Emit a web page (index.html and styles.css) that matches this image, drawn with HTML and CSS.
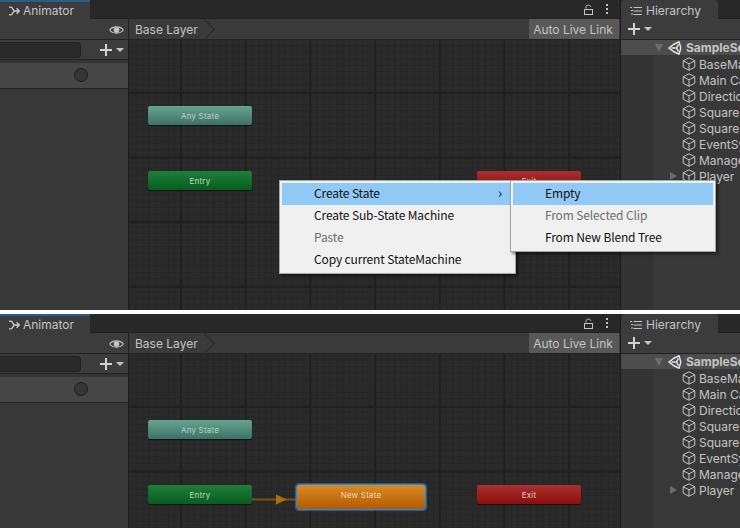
FILE: index.html
```html
<!DOCTYPE html>
<html lang="en">
<head>
<meta charset="utf-8">
<title>Animator</title>
<link rel="stylesheet" href="styles.css">
</head>
<body>
<svg class="defs" width="0" height="0" aria-hidden="true">
  <symbol id="cube" viewBox="0 0 14 14"><path d="M7 .8 12.8 3.800V10.200L7 13.200 1.200 10.200V3.800ZM1.200 3.800 7 6.800 12.800 3.800M7 6.800V13.200" fill="none" stroke="#c4c4c4" stroke-width="1"/></symbol>
  <symbol id="unity" viewBox="0 0 14 14"><path d="M1 7 6 3.200 11 .8 12.600 6 12.600 8 11 13.200 6 10.800ZM3.400 7H8.600L10.400 3.400M8.600 7 10.400 10.600" fill="none" stroke="#e2e2e2" stroke-width="1.500"/></symbol>
  <symbol id="anim" viewBox="0 0 12 10"><path d="M0 .8 3 1 5.500 5 3 9 0 9.200M5.500 5H11M8.300 2 11.300 5 8.300 8" fill="none" stroke="#cfcfcf" stroke-width="1.400"/></symbol>
  <symbol id="eye" viewBox="0 0 16 10"><path d="M.8 5C4 .6 12 .6 15.200 5 12 9.400 4 9.400 .8 5Z" fill="none" stroke="#c4c4c4" stroke-width="1.200"/><circle cx="8" cy="5" r="3" fill="#c4c4c4"/></symbol>
  <symbol id="lock" viewBox="0 0 9 11"><path d="M2 4.500V2.800C2 .6 6.600 .6 6.800 2.800" fill="none" stroke="#c4c4c4"/><rect x=".5" y="5.500" width="8" height="5" fill="none" stroke="#c4c4c4"/></symbol>
  <symbol id="list" viewBox="0 0 12 10"><path d="M3.500 1.500H12M3.500 5H12M3.500 8.500H12" stroke="#c4c4c4" fill="none"/><path d="M0 1.500H2M1 4.500H3M1 8H3" stroke="#c4c4c4" fill="none"/></symbol>
</svg>

<section class="shot shot-top">
  <div class="animator">
    <div class="tabbar">
      <div class="tab tab-anim"><svg class="tab-icon"><use href="#anim"/></svg><span>Animator</span></div>
      <div class="tab-tools">
        <svg class="lock"><use href="#lock"/></svg>
        <span class="dots"><i></i><i></i><i></i></span>
      </div>
    </div>
    <div class="anim-body">
      <aside class="side">
        <div class="side-head"><svg class="eye"><use href="#eye"/></svg></div>
        <div class="side-tools"><div class="search"></div><span class="plus"></span><span class="caret"></span></div>
        <div class="side-gap"></div>
        <div class="param"><span class="dot"></span></div>
      </aside>
      <div class="main">
        <div class="crumbs">
          <div class="crumb">Base Layer</div>
          <div class="live">Auto Live Link</div>
        </div>
        <div class="canvas">
          <div class="node any">Any State</div>
          <div class="node entry">Entry</div>
          <div class="node exit">Exit</div>
        </div>
      </div>
    </div>
  </div>
  <div class="hier">
    <div class="tabbar"><div class="tab tab-hier"><svg class="tab-list"><use href="#list"/></svg><span>Hierarchy</span></div></div>
    <div class="hier-tools"><span class="plus"></span><span class="caret"></span></div>
    <div class="tree">
      <div class="scene"><span class="tri down"></span><svg class="unity"><use href="#unity"/></svg><b>SampleScene</b></div>
      <div class="go"><svg class="cube"><use href="#cube"/></svg>BaseMap</div>
      <div class="go"><svg class="cube"><use href="#cube"/></svg>Main Camera</div>
      <div class="go"><svg class="cube"><use href="#cube"/></svg>Directional Light</div>
      <div class="go"><svg class="cube"><use href="#cube"/></svg>Square</div>
      <div class="go"><svg class="cube"><use href="#cube"/></svg>Square</div>
      <div class="go"><svg class="cube"><use href="#cube"/></svg>EventSystem</div>
      <div class="go"><svg class="cube"><use href="#cube"/></svg>Manager</div>
      <div class="go parent"><span class="tri right"></span><svg class="cube"><use href="#cube"/></svg>Player</div>
    </div>
  </div>
  <div class="menu menu-main">
    <div class="item active">Create State<span class="chev">&#8250;</span></div>
    <div class="item">Create Sub-State Machine</div>
    <div class="item off">Paste</div>
    <div class="item">Copy current StateMachine</div>
  </div>
  <div class="menu menu-sub">
    <div class="item active">Empty</div>
    <div class="item off">From Selected Clip</div>
    <div class="item">From New Blend Tree</div>
  </div>
</section>

<section class="shot shot-bottom">
  <div class="animator">
    <div class="tabbar">
      <div class="tab tab-anim"><svg class="tab-icon"><use href="#anim"/></svg><span>Animator</span></div>
      <div class="tab-tools">
        <svg class="lock"><use href="#lock"/></svg>
        <span class="dots"><i></i><i></i><i></i></span>
      </div>
    </div>
    <div class="anim-body">
      <aside class="side">
        <div class="side-head"><svg class="eye"><use href="#eye"/></svg></div>
        <div class="side-tools"><div class="search"></div><span class="plus"></span><span class="caret"></span></div>
        <div class="side-gap"></div>
        <div class="param"><span class="dot"></span></div>
      </aside>
      <div class="main">
        <div class="crumbs">
          <div class="crumb">Base Layer</div>
          <div class="live">Auto Live Link</div>
        </div>
        <div class="canvas">
          <div class="node any">Any State</div>
          <div class="node entry">Entry</div>
          <svg class="link" viewBox="0 0 44 14"><path d="M0 6.500H44" stroke="#7d5108" stroke-width="2"/><path d="M24 1.500 35 6.500 24 11.500Z" fill="#a96f0c"/></svg>
          <div class="node fresh">New State</div>
          <div class="node exit">Exit</div>
        </div>
      </div>
    </div>
  </div>
  <div class="hier">
    <div class="tabbar"><div class="tab tab-hier"><svg class="tab-list"><use href="#list"/></svg><span>Hierarchy</span></div></div>
    <div class="hier-tools"><span class="plus"></span><span class="caret"></span></div>
    <div class="tree">
      <div class="scene"><span class="tri down"></span><svg class="unity"><use href="#unity"/></svg><b>SampleScene</b></div>
      <div class="go"><svg class="cube"><use href="#cube"/></svg>BaseMap</div>
      <div class="go"><svg class="cube"><use href="#cube"/></svg>Main Camera</div>
      <div class="go"><svg class="cube"><use href="#cube"/></svg>Directional Light</div>
      <div class="go"><svg class="cube"><use href="#cube"/></svg>Square</div>
      <div class="go"><svg class="cube"><use href="#cube"/></svg>Square</div>
      <div class="go"><svg class="cube"><use href="#cube"/></svg>EventSystem</div>
      <div class="go"><svg class="cube"><use href="#cube"/></svg>Manager</div>
      <div class="go parent"><span class="tri right"></span><svg class="cube"><use href="#cube"/></svg>Player</div>
    </div>
  </div>
</section>
</body>
</html>
```

FILE: styles.css
```css
* { box-sizing: border-box; }
html, body { margin: 0; padding: 0; background: #fff; }
body { width: 740px; height: 528px; overflow: hidden; font-family: Inter, "Noto Sans", sans-serif; font-size: 12px; color: #c4c4c4; }
.defs { position: absolute; }

.shot { position: relative; display: flex; width: 740px; overflow: hidden; background: #191919; }
.shot-top { height: 310px; margin-bottom: 4px; }
.shot-bottom { height: 214px; }

.animator { width: 620px; flex: none; display: flex; flex-direction: column; }
.hier { width: 119px; margin-left: 1px; flex: none; display: flex; flex-direction: column; overflow: hidden; background: #383838; }

.tabbar { height: 19px; flex: none; display: flex; justify-content: space-between; background: #282828; border-bottom: 1px solid #232323; }
.tab { height: 19px; display: flex; align-items: center; background: #3c3c3c; white-space: nowrap; }
.tab-anim { width: 90px; padding-left: 9px; border-top: 2px solid #2c5d87; }
.tab-icon { width: 11px; height: 10px; margin-right: 3px; }
.tab-hier { width: 97px; padding: 2px 0 0 9px; border-radius: 3px 3px 0 0; }
.tab-list { width: 12px; height: 10px; margin-right: 4px; }
.tab-tools { display: flex; align-items: center; padding-right: 12px; gap: 13px; }
.lock { width: 9px; height: 11px; }
.dots { display: flex; flex-direction: column; gap: 2px; }
.dots i { width: 2px; height: 2px; background: #c4c4c4; }

.anim-body { flex: 1; display: flex; min-height: 0; }
.side { width: 129px; flex: none; background: #383838; border-right: 1px solid #1f1f1f; }
.side-head { height: 21px; display: flex; justify-content: flex-end; align-items: center; padding: 2px 4px 0 0; background: #3c3c3c; border-bottom: 1px solid #232323; }
.eye { width: 15px; height: 10px; }
.side-tools { height: 20px; display: flex; align-items: center; background: #3c3c3c; border-bottom: 1px solid #232323; }
.search { width: 81px; height: 16px; margin-right: 19px; background: #2a2a2a; border: 1px solid #212121; border-left: 0; border-radius: 0 4px 4px 0; }
.plus { position: relative; width: 12px; height: 12px; flex: none; margin-right: 4px; background: linear-gradient(#d2d2d2, #d2d2d2) center / 100% 2px no-repeat, linear-gradient(#d2d2d2, #d2d2d2) center / 2px 100% no-repeat; }
.caret { width: 0; height: 0; border-left: 4px solid transparent; border-right: 4px solid transparent; border-top: 4px solid #c4c4c4; }
.side-gap { height: 3px; background: #343434; }
.param { height: 26px; display: flex; align-items: center; padding: 0 0 2px 74px; background: #464646; border-bottom: 1px solid #232323; }
.dot { width: 14px; height: 14px; border-radius: 50%; background: #363636; border: 1px solid #1c1c1c; }

.main { flex: 1; display: flex; flex-direction: column; min-width: 0; }
.crumbs { height: 21px; flex: none; display: flex; justify-content: space-between; background: #3a3a3a; border-bottom: 1px solid #232323; }
.crumb { position: relative; width: 77px; height: 20px; padding-left: 6px; line-height: 22px; white-space: nowrap; }
.crumb::after { content: ""; position: absolute; right: -6px; top: 3px; width: 14px; height: 14px; border-top: 1px solid #2a2a2a; border-right: 1px solid #2a2a2a; transform: rotate(45deg); }
.live { width: 90px; height: 20px; margin-right: 1px; padding-right: 2px; line-height: 22px; text-align: center; background: #585858; white-space: nowrap; }

.canvas { position: relative; flex: 1; min-height: 0; overflow: hidden; background-color: #2a2a2a;
  background-image:
    linear-gradient(#202020 2px, transparent 2px),
    linear-gradient(90deg, #202020 2px, transparent 2px),
    linear-gradient(#252525 1px, transparent 1px),
    linear-gradient(90deg, #252525 1px, transparent 1px);
  background-size: 64.7px 64.7px, 64.7px 64.7px, 6.47px 6.47px, 6.47px 6.47px;
  background-position: 0 52px, 51px 0, 0 -1px, 0 0;
}
.node { position: absolute; width: 104px; height: 19px; display: flex; align-items: center; justify-content: center; border-radius: 2px; font-size: 8px; letter-spacing: .2px; box-shadow: 0 1px 1px rgba(0,0,0,.6); }
.any { left: 19px; top: 66px; color: #bcd0c9; background: linear-gradient(#66a48f, #3d7265); }
.entry { left: 19px; top: 131px; color: #c3d8c6; background: linear-gradient(#1d7f38, #085d1e); }
.exit { left: 348px; top: 131px; color: #e2c6c6; background: linear-gradient(#a8312f, #8e0d0c); }
.fresh { left: 167px; top: 130px; width: 130px; height: 26px; padding-bottom: 5px; color: #edd8bd; background: linear-gradient(#d98a25, #b45a00); border: 1px solid #2f86d6; box-shadow: 0 0 1px 1px rgba(47,134,214,.6); border-radius: 3px; }
.link { position: absolute; left: 123px; top: 139px; width: 44px; height: 14px; }

.hier-tools { height: 21px; flex: none; display: flex; align-items: center; padding-left: 7px; background: #3c3c3c; border-bottom: 1px solid #232323; }
.tree { flex: 1; background: linear-gradient(90deg, #333 32px, #383838 32px); white-space: nowrap; }
.scene { height: 15px; display: flex; align-items: center; padding-left: 34px; background: #4d4d4d; margin-bottom: 1px; }
.scene b { font-weight: 700; color: #c4c4c4; }
.unity { width: 14px; height: 14px; margin-left: 5px; margin-right: 4px; flex: none; }
.go { height: 16px; display: flex; align-items: center; padding-left: 61px; }
.parent { padding-left: 49px; }
.cube { width: 14px; height: 14px; margin-right: 3px; flex: none; }
.tri { width: 0; height: 0; flex: none; }
.tri.down { border-left: 4.500px solid transparent; border-right: 4.500px solid transparent; border-top: 8px solid #6c6c6c; }
.tri.right { margin-right: 5px; border-top: 4px solid transparent; border-bottom: 4px solid transparent; border-left: 7px solid #6c6c6c; }

.menu { position: absolute; padding: 2px; background: #f0f0f0; border: 1px solid #a6a6a6; box-shadow: 2px 2px 3px rgba(0,0,0,.5); font-family: "Noto Sans CJK KR", "Noto Sans", sans-serif; font-size: 12px; letter-spacing: -.14px; color: #111; }
.menu-main { left: 279px; top: 180px; width: 237px; }
.menu-sub { left: 510px; top: 180px; width: 206px; }
.item { position: relative; height: 22px; padding-left: 32px; line-height: 20px; white-space: nowrap; }
.active { background: #90c8f6; }
.off { color: #6d6d6d; }
.chev { position: absolute; right: 11px; top: -1px; font-size: 14px; }
```
